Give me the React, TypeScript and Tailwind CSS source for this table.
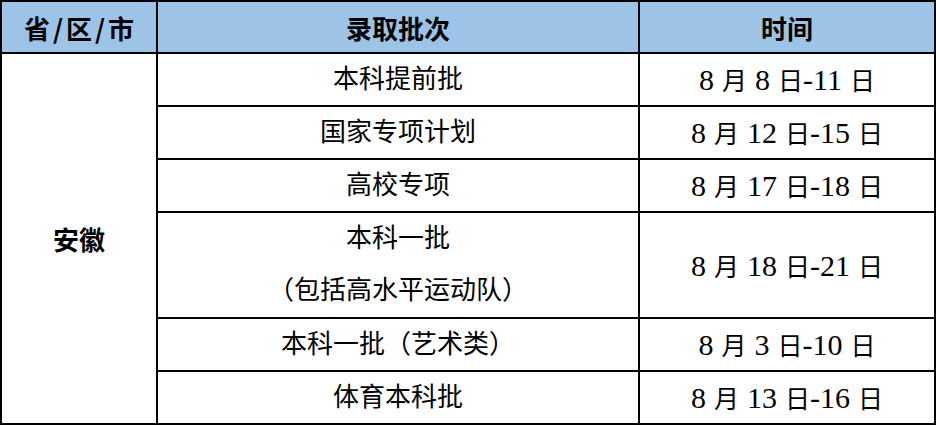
const rows = [
  { name: ["本科提前批"], time: ["8", "月", "8", "日-11", "日"] },
  { name: ["国家专项计划"], time: ["8", "月", "12", "日-15", "日"] },
  { name: ["高校专项"], time: ["8", "月", "17", "日-18", "日"] },
  { name: ["本科一批", "（包括高水平运动队）"], time: ["8", "月", "18", "日-21", "日"] },
  { name: ["本科一批（艺术类）"], time: ["8", "月", "3", "日-10", "日"] },
  { name: ["体育本科批"], time: ["8", "月", "13", "日-16", "日"] },
];

const cjk = "font-['Liberation_Serif','Noto_Sans_CJK_SC',serif]";
const head = "font-['Noto_Sans_CJK_SC',sans-serif]";

function TimeText({ parts }: { parts: string[] }) {
  return (
    <span className="flex items-baseline">
      <span className="text-[30px]">{parts[0]}</span>
      <span className="ml-[8px]">{parts[1]}</span>
      <span className="ml-[8px] text-[30px]">{parts[2]}</span>
      <span className="ml-[8px]">{parts[3].slice(0, 1)}</span>
      <span className="text-[30px]">{parts[3].slice(1)}</span>
      <span className="ml-[8px]">{parts[4]}</span>
    </span>
  );
}

export default function App() {
  return (
    <div className="w-[936px] h-[425px] bg-white">
      <div
        className={`grid grid-cols-[154px_480px_294px] grid-rows-[50px_51px_51px_51px_104px_51px_51px] gap-[2px] bg-black p-[2px] text-black ${cjk}`}
      >
        <div className={`bg-[#9dc3e6] flex items-center justify-center text-[26px] font-bold ${head}`}>
          省<span className="mx-[3px]">/</span>区<span className="mx-[3px]">/</span>市
        </div>
        <div className={`bg-[#9dc3e6] flex items-center justify-center text-[26px] font-bold ${head}`}>
          录取批次
        </div>
        <div className={`bg-[#9dc3e6] flex items-center justify-center text-[26px] font-bold ${head}`}>
          时间
        </div>
        <div className={`bg-white row-span-6 flex items-center justify-center text-[26px] font-bold ${head}`}>
          安徽
        </div>
        {rows.map((r, i) => (
          <div key={i} className="contents">
            <div className="bg-white flex flex-col items-center justify-center text-[26px] leading-[52px]">
              {r.name.map((n) => (
                <span key={n}>{n}</span>
              ))}
            </div>
            <div className="bg-white flex items-center justify-center text-[25px]">
              <TimeText parts={r.time} />
            </div>
          </div>
        ))}
      </div>
    </div>
  );
}
